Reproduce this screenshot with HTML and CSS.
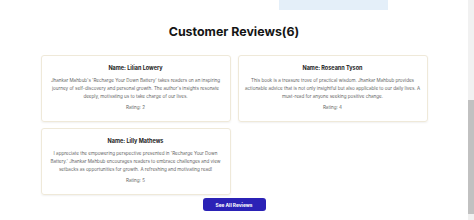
FILE: index.html
```html
<!DOCTYPE html>
<html lang="en">
<head>
    <meta charset="UTF-8">
    <meta name="viewport" content="width=device-width, initial-scale=1.0">
    <title>Customer Reviews</title>
    <link rel="stylesheet" href="styles.css">
</head>
<body>
    <div class="page">
        <div class="top-strip"><div class="strip-box"></div></div>
        <h2 class="title">Customer Reviews(6)</h2>
        <div class="reviews">
            <div class="card">
                <h3 class="name">Name: Lilian Lowery</h3>
                <p class="text">Jhankar Mahbub's 'Recharge Your Down Battery' takes readers on an inspiring journey of self-discovery and personal growth. The author's insights resonate deeply, motivating us to take charge of our lives.</p>
                <p class="rating">Rating: 2</p>
            </div>
            <div class="card">
                <h3 class="name">Name: Roseann Tyson</h3>
                <p class="text">This book is a treasure trove of practical wisdom. Jhankar Mahbub provides actionable advice that is not only insightful but also applicable to our daily lives. A must-read for anyone seeking positive change.</p>
                <p class="rating">Rating: 4</p>
            </div>
            <div class="card">
                <h3 class="name">Name: Lilly Mathews</h3>
                <p class="text">I appreciate the empowering perspective presented in 'Recharge Your Down Battery.' Jhankar Mahbub encourages readers to embrace challenges and view setbacks as opportunities for growth. A refreshing and motivating read!</p>
                <p class="rating">Rating: 5</p>
            </div>
        </div>
        <div class="actions">
            <button class="see-all">See All Reviews</button>
        </div>
    </div>
    <div class="scrollbar"><div class="thumb"></div></div>
</body>
</html>
```

FILE: styles.css
```css
body {
    margin: 0;
    background: #fff;
    font-family: Inter, 'Liberation Sans', sans-serif;
    color: #222;
    overflow: hidden;
}
.page {
    width: 468px;
}
.top-strip {
    height: 10px;
    display: flex;
    padding-left: 279px;
}
.strip-box {
    width: 109px;
    height: 10px;
    background: #e4eff9;
}
.title {
    margin: 13px 0 0;
    height: 32px;
    font-size: 12.4px;
    line-height: 18px;
    font-weight: 700;
    text-align: center;
    color: #151515;
}
.reviews {
    width: 387px;
    margin: 0 auto;
    display: grid;
    grid-template-columns: 1fr 1fr;
    column-gap: 7px;
    row-gap: 6px;
}
.card {
    border: 1px solid #efe9d9;
    border-radius: 3px;
    box-shadow: 0 1px 2px rgba(0, 0, 0, 0.06);
    padding: 8px 3px 7px;
    text-align: center;
    height: 50px;
}
.name {
    margin: 0;
    font-size: 5.5px;
    line-height: 8px;
    font-weight: 700;
    color: #222;
}
.text {
    margin: 5px 0 0;
    font-size: 4.55px;
    line-height: 8px;
    color: #666;
}
.rating {
    margin: 3px 0 0;
    font-size: 4.55px;
    line-height: 8px;
    color: #666;
}
.actions {
    display: flex;
    justify-content: center;
    margin-top: 3px;
}
.see-all {
    width: 63px;
    height: 13px;
    border: none;
    border-radius: 3px;
    background: #2b22b6;
    color: #fff;
    font-family: Inter, 'Liberation Sans', sans-serif;
    font-size: 4.8px;
    font-weight: 700;
    padding: 0;
}
.scrollbar {
    position: fixed;
    top: 0;
    right: 0;
    width: 6px;
    height: 220px;
    background: #f1f1f1;
}
.thumb {
    margin-top: 100px;
    height: 114px;
    background: #c1c1c1;
}
```
